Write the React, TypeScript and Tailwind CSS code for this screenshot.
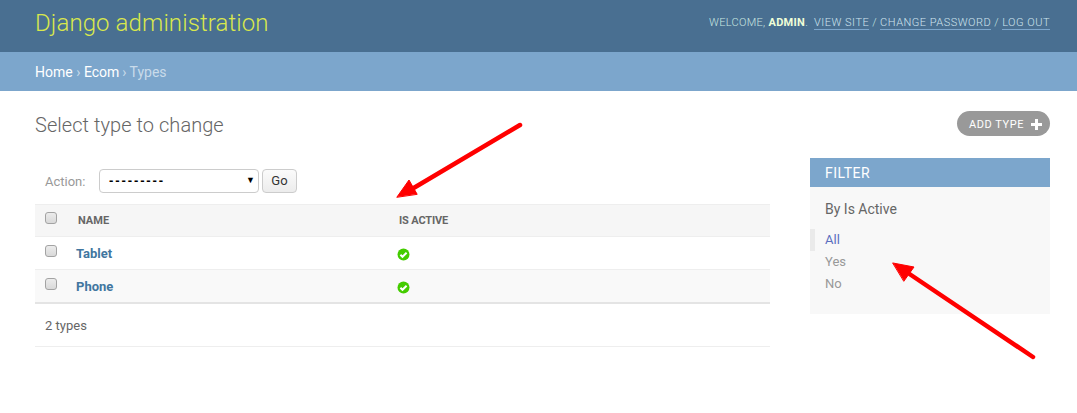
const rows = [
  { name: "Tablet", bg: "bg-white" },
  { name: "Phone", bg: "bg-[#f9f9f9]" },
];

function Box() {
  return (
    <span className="block w-[12px] h-[12px] rounded-[3px] border border-[#a3a3a3] bg-gradient-to-b from-[#ececec] to-[#d9d9d9]" />
  );
}

function ActiveIcon() {
  return (
    <svg width="13" height="13" viewBox="0 0 13 13">
      <circle cx="6.5" cy="6.5" r="6" fill="#44cc00" />
      <path d="M3.4 6.7 L5.5 8.8 L9.6 4.7" fill="none" stroke="#fff" strokeWidth="2" />
    </svg>
  );
}

export default function App() {
  return (
    <div className="relative w-[1077px] h-[413px] overflow-hidden bg-white text-[13px] text-[#333] font-['Roboto',sans-serif]">
      {/* header */}
      <div className="h-[52px] bg-[#496f91] pl-[35px] pr-[27px] flex justify-between items-start">
        <h1 className="font-light text-[24px] leading-[30px] pt-[8px] tracking-[0.1px] text-[#d9e84c]">Django administration</h1>
        <div className="pt-[16px] text-[11px] leading-[13px] tracking-[0.5px] uppercase font-light text-[#c8e6e0] flex">
          <span className="tracking-[0.3px]">
            Welcome, <b className="font-bold text-[#f0ffd8]">admin</b>.
          </span>
          <a className="ml-[6px] border-b border-[#7ca6cc] text-[#cfe4ee]">View site</a>
          <span className="mx-[3px]">/</span>
          <a className="border-b border-[#7ca6cc] text-[#cfe4ee]">Change password</a>
          <span className="mx-[3px]">/</span>
          <a className="border-b border-[#7ca6cc] text-[#cfe4ee]">Log out</a>
        </div>
      </div>

      {/* breadcrumbs */}
      <div className="h-[39px] bg-[#7ca6cc] px-[35px] pt-[2px] flex items-center text-[14px] text-[#c9dbea]">
        <a className="text-white">Home</a>
        <span className="mx-[3.5px]">›</span>
        <a className="text-white">Ecom</a>
        <span className="mx-[3px]">›</span>
        <span>Types</span>
      </div>

      {/* content */}
      <div className="pl-[35px] pr-[27px] pt-[20px]">
        <div className="flex justify-between items-start h-[47px]">
          <h2 className="font-light text-[20px] leading-[27px] pt-[1px] tracking-[0.05px] text-[#666]">Select type to change</h2>
          <a className="h-[25px] w-[93px] rounded-[13px] bg-[#999] flex items-center pl-[12px] pt-[1px] text-[11px] leading-[25px] tracking-[0.55px] uppercase text-white">
            Add type
            <svg width="11" height="11" viewBox="0 0 11 11" className="ml-[7px]">
              <path d="M4 0h3v4h4v3H7v4H4V7H0V4h4z" fill="#fff" />
            </svg>
          </a>
        </div>

        <div className="flex justify-between items-start">
          {/* changelist */}
          <div className="w-[735px]">
            <div className="h-[46px] flex items-start pt-[11px] pl-[10px] text-[#999]">
              <span className="w-[54px] leading-[24px] pt-[1px]">Action:</span>
              <div className="relative w-[160px] h-[24px] rounded-[4px] border border-[#ccc] bg-white pl-[9px] font-['Liberation_Sans',sans-serif] text-[13px] font-bold tracking-[1.9px] leading-[22px] text-black">
                ---------
                <span className="absolute right-[3px] top-[-1px] text-[9px] font-normal tracking-normal leading-[22px]">▼</span>
              </div>
              <button className="ml-[3px] w-[35px] h-[24px] rounded-[4px] border border-[#ccc] bg-gradient-to-b from-[#fbfbfb] to-[#ececec] text-[13px] text-[#333]">
                Go
              </button>
            </div>

            <div className="h-[33px] bg-[#f6f6f6] border-t border-b border-[#eee] flex items-center text-[11px] font-bold uppercase text-[#666]">
              <div className="w-[43px] pl-[10px] -mt-[5px]"><Box /></div>
              <div className="w-[321px] pt-[1px]">Name</div>
              <div className="pt-[1px] tracking-[-0.15px]">Is active</div>
            </div>
            {rows.map((row) => (
              <div key={row.name} className={`h-[33px] ${row.bg} border-b border-[#eee] flex items-center`}>
                <div className="w-[41px] pl-[10px] -mt-[4px]"><Box /></div>
                <a className="w-[321px] pt-[1px] font-bold text-[#41769f]">{row.name}</a>
                <div className="pt-[2px]"><ActiveIcon /></div>
              </div>
            ))}

            <div className="h-[44px] border-t-2 border-[#e4e4e4] -mt-[1px] flex items-center pl-[10px] pt-[1px] text-[#666]">
              2 types
            </div>
            <div className="h-[1px] bg-[#eee]" />
          </div>

          {/* filter */}
          <div className="w-[240px] h-[156px] bg-[#f8f8f8]">
            <h2 className="h-[29px] bg-[#7ca6cc] px-[15px] pt-[1px] text-[14px] leading-[29px] uppercase tracking-[0.5px] text-white">Filter</h2>
            <h3 className="px-[15px] pt-[14px] text-[14px] leading-[16px] text-[#666]">By Is Active</h3>
            <ul className="pt-[12px]">
              <li className="h-[22px] pl-[10px] border-l-[5px] border-[#eaeaea] leading-[22px] text-[#5b6fc0]">All</li>
              <li className="h-[22px] pl-[15px] leading-[22px] text-[#999]">Yes</li>
              <li className="h-[22px] pl-[15px] leading-[22px] text-[#999]">No</li>
            </ul>
          </div>
        </div>
      </div>

      {/* annotation arrows */}
      <svg className="absolute inset-0 pointer-events-none" width="1077" height="413">
        <g fill="#ff0000" stroke="#ff0000" strokeLinecap="round">
          <line x1="520" y1="125" x2="412" y2="189" strokeWidth="4.5" />
          <path d="M397 197 L409 180 L417 194 Z" strokeWidth="1" />
          <line x1="1033" y1="357" x2="908" y2="273" strokeWidth="4.5" />
          <path d="M893 263 L914 267 L904 281 Z" strokeWidth="1" />
        </g>
      </svg>
    </div>
  );
}
